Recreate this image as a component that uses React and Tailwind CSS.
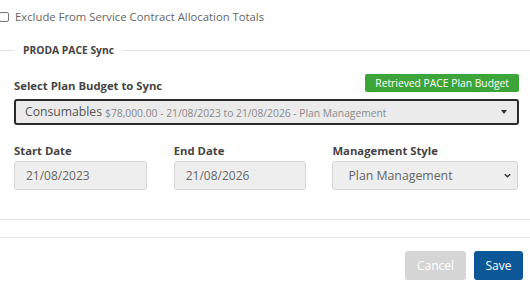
import React from "react";

export default function App() {
  return (
    <div className="w-[530px] h-[297px] bg-white overflow-hidden relative text-[#555]" style={{ fontFamily: '"Open Sans", sans-serif' }}>
      {/* checkbox row */}
      <div className="flex items-center h-[18px] mt-[8px] -ml-[1px]">
        <span className="w-[10px] h-[10px] border border-[#777] rounded-[2px] bg-white" />
        <span className="ml-[6px] text-[11.3px] text-[#666] leading-none">Exclude From Service Contract Allocation Totals</span>
      </div>

      {/* fieldset legend */}
      <div className="flex items-center mt-[17px] h-[14px]">
        <div className="w-[14px] h-px bg-[#e2e2e2]" />
        <span className="px-[9px] text-[10.3px] font-bold text-[#444] leading-none">PRODA PACE Sync</span>
        <div className="flex-1 h-px bg-[#e2e2e2]" />
      </div>

      <div className="pl-[14px] pr-[12px]">
        {/* label + badge */}
        <div className="flex items-end justify-between mt-[16px] h-[19px]">
          <span className="text-[11.3px] font-bold text-[#444] leading-none mb-[1px]">Select Plan Budget to Sync</span>
          <span className="bg-[#3da43a] text-white text-[10.3px] leading-none rounded-[2px] px-[10px] py-[4px] mr-[-1px]">Retrieved PACE Plan Budget</span>
        </div>

        {/* select */}
        <div className="mt-[7px] h-[26px] border-2 border-[#2b2b2b] rounded-[3px] bg-[#ebebeb] flex items-center pl-[9px] pr-[10px] mr-[-1px]">
          <span className="text-[12.2px] text-[#555] leading-none">Consumables</span>
          <span className="ml-[3px] text-[10.3px] text-[#8a8a8a] leading-none mt-[2px]">$78,000.00 - 21/08/2023 to 21/08/2026 - Plan Management</span>
          <span className="ml-auto w-0 h-0 border-l-[3.5px] border-r-[3.5px] border-t-[4px] border-l-transparent border-r-transparent border-t-[#333]" />
        </div>

        {/* dates row */}
        <div className="flex mt-[20px]">
          <div className="w-[133px]">
            <div className="text-[11.3px] font-bold text-[#444] leading-none">Start Date</div>
            <div className="mt-[5px] h-[29px] border border-[#d6d6d6] rounded-[3px] bg-[#eeeeee] flex items-center pl-[11px] text-[12px] text-[#666]">21/08/2023</div>
          </div>
          <div className="w-[133px] ml-[27px]">
            <div className="text-[11.3px] font-bold text-[#444] leading-none">End Date</div>
            <div className="mt-[5px] h-[29px] border border-[#d6d6d6] rounded-[3px] bg-[#eeeeee] flex items-center pl-[11px] text-[12px] text-[#666]">21/08/2026</div>
          </div>
          <div className="w-[186px] ml-[26px]">
            <div className="text-[11.3px] font-bold text-[#444] leading-none">Management Style</div>
            <div className="mt-[5px] h-[29px] border border-[#d6d6d6] rounded-[3px] bg-[#eeeeee] flex items-center pl-[15px] pr-[5px] text-[12.3px] text-[#666]">
              <span>Plan Management</span>
              <svg className="ml-auto" width="9" height="9" viewBox="0 0 10 10"><path d="M2 3.5 L5 6.5 L8 3.5" fill="none" stroke="#333" strokeWidth="1.6" /></svg>
            </div>
          </div>
        </div>
      </div>

      <div className="mt-[29px] h-px bg-[#e6e6e6]" />
      <div className="mt-[17px] h-px bg-[#e6e6e6]" />

      <div className="flex justify-end pr-[7px] mt-[13px]">
        <button className="w-[61px] h-[29px] rounded-[3px] bg-[#d5d5d5] text-white text-[12px]">Cancel</button>
        <button className="ml-[8px] w-[49px] h-[29px] rounded-[3px] bg-[#0b5797] text-white text-[12px]">Save</button>
      </div>
    </div>
  );
}
